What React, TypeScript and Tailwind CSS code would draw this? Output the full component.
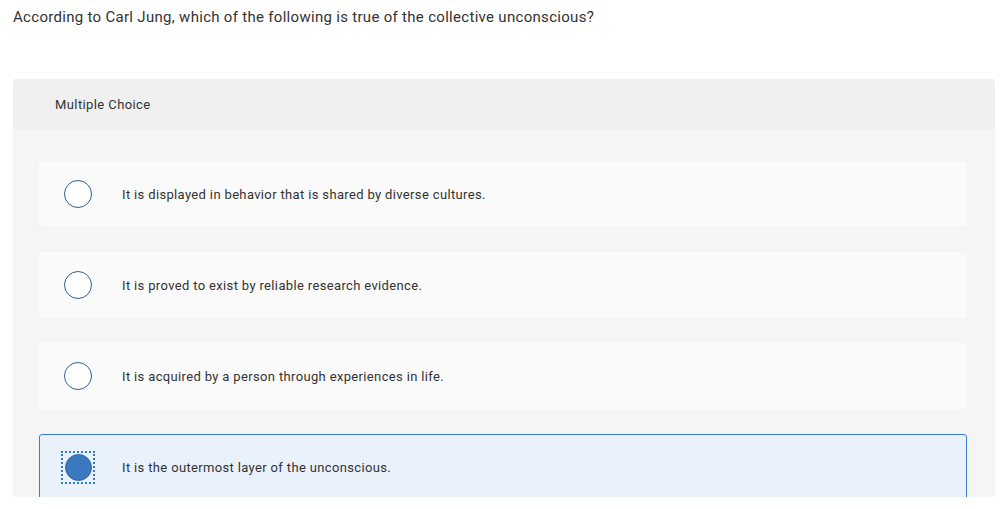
const OPTIONS = [
  { id: 'a', label: 'It is displayed in behavior that is shared by diverse cultures.' },
  { id: 'b', label: 'It is proved to exist by reliable research evidence.' },
  { id: 'c', label: 'It is acquired by a person through experiences in life.' },
  { id: 'd', label: 'It is the outermost layer of the unconscious.' },
]

const SELECTED = 'd'

function Radio({ checked }: { checked: boolean }) {
  if (checked) {
    return (
      <span className="flex h-[33px] w-[34px] items-center justify-center border-2 border-dotted border-[#3a78bf]">
        <span className="h-[27px] w-[27px] rounded-full border border-[#2f64a3] bg-[#3a78bf]" />
      </span>
    )
  }
  return (
    <span className="flex h-[33px] w-[34px] items-center justify-center">
      <span className="h-[28px] w-[28px] rounded-full border-[1.5px] border-[#2c5e95] bg-white" />
    </span>
  )
}

export default function App() {
  return (
    <div className="h-[497px] overflow-hidden bg-white font-['Roboto',sans-serif] text-[#333]">
      <p className="px-[13px] pt-[7px] text-[15px] leading-[20px] tracking-[0.3px]">
        According to Carl Jung, which of the following is true of the collective unconscious?
      </p>

      <section className="ml-[13px] mr-[11px] mt-[52px] rounded-t-[3px] bg-[#f5f5f5]">
        <div className="flex h-[50px] items-center rounded-t-[3px] bg-[#f0f0f0] px-[42px] pt-[2px] text-[13px] tracking-[0.4px]">
          Multiple Choice
        </div>

        <ul className="flex flex-col gap-[25px] pl-[26px] pr-[28px] pt-[32px] pb-[40px]">
          {OPTIONS.map((option) => {
            const checked = option.id === SELECTED
            return (
              <li
                key={option.id}
                className={
                  checked
                    ? 'flex h-[66px] items-center rounded-[3px] border border-[#3a7bd5] bg-[#e9f2fb] pl-[21px]'
                    : 'flex h-[66px] items-center rounded-[3px] border border-transparent bg-[#fafafa] pl-[21px]'
                }
              >
                <Radio checked={checked} />
                <span className="ml-[27px] pt-[2px] text-[13px] tracking-[0.35px]">{option.label}</span>
              </li>
            )
          })}
        </ul>
      </section>
    </div>
  )
}
